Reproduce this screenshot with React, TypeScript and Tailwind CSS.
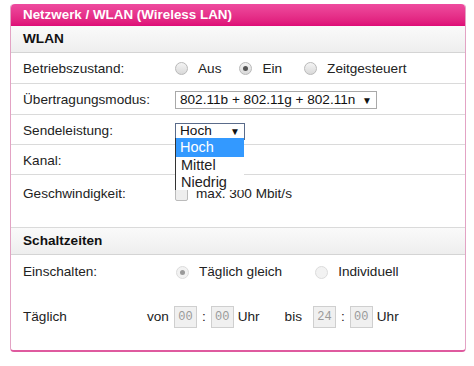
import React from "react";

function Radio({ checked = false, faded = false }: { checked?: boolean; faded?: boolean }) {
  return (
    <span
      className={`flex h-[13px] w-[13px] items-center justify-center rounded-full border ${
        faded ? "border-[#dcdcdc] bg-[#f2f2f2]" : "border-[#b9b9b9] bg-gradient-to-b from-[#f4f4f4] to-[#d9d9d9]"
      }`}
    >
      {checked && <span className={`h-[5px] w-[5px] rounded-full ${faded ? "bg-[#9a9a9a]" : "bg-[#555]"}`} />}
    </span>
  );
}

function Row({ label, children, className = "h-[31px] pt-[2px]" }: { label: string; children?: React.ReactNode; className?: string }) {
  return (
    <div className={`flex items-center border-b border-[#dadada] ${className}`}>
      <span className="w-[164px] shrink-0 pl-[12px]">{label}</span>
      <div className="flex items-center">{children}</div>
    </div>
  );
}

function Section({ title }: { title: string }) {
  return (
    <div className="flex h-[27px] items-center border-b border-[#d4d4d4] bg-gradient-to-b from-[#fafafa] to-[#eeeeee] pl-[12px] pt-[1px] font-bold text-[#111]">
      {title}
    </div>
  );
}

function TimeBox({ value }: { value: string }) {
  return (
    <span className="flex h-[22px] w-[23px] items-center justify-center border border-[#cfcfcf] bg-[#f0f0f0] font-['Liberation_Mono',monospace] text-[12px] text-[#9a9a9a]">
      {value}
    </span>
  );
}

export default function App() {
  return (
    <div className="h-[366px] w-[474px] bg-white pl-[10px] pr-[8px] pt-[4px] font-['Liberation_Sans',Arial,sans-serif] text-[13.6px] text-[#222]">
      <div className="h-[348px] rounded-[4px] border-x border-b-2 border-[#e3a3c4] border-b-[#df5a9f] bg-white">
        <div className="flex h-[22px] items-center rounded-t-[4px] bg-gradient-to-b from-[#ee4a9f] to-[#de0a77] pl-[12px] text-[13.4px] font-bold text-white">
          Netzwerk / WLAN (Wireless LAN)
        </div>
        <Section title="WLAN" />
        <Row label="Betriebszustand:">
          <span className="flex items-center gap-[10px]"><Radio /><span>Aus</span></span>
          <span className="ml-[18px] flex items-center gap-[10px]"><Radio checked /><span>Ein</span></span>
          <span className="ml-[22px] flex items-center gap-[10px]"><Radio /><span>Zeitgesteuert</span></span>
        </Row>
        <Row label="Übertragungsmodus:">
          <span className="flex h-[18px] w-[202px] items-center justify-between border border-[#a9a9a9] px-[4px] pt-[1px] text-[#111]">
            <span>802.11b + 802.11g + 802.11n</span>
            <span className="text-[10px]">▼</span>
          </span>
        </Row>
        <div className="relative">
          <Row label="Sendeleistung:" className="h-[30px] pt-[3px]">
            <span className="flex h-[17px] w-[70px] items-center justify-between border border-[#5a6b8a] px-[4px] pt-[1px] text-[#111]">
              <span>Hoch</span>
              <span className="text-[10px]">▼</span>
            </span>
          </Row>
          <div className="absolute left-[164px] top-[23px] z-10 flex w-[69px] flex-col border-l border-[#333] bg-white text-[14.5px]">
            <span className="h-[19px] bg-[#3399ff] pl-[4px] leading-[19px] text-white">Hoch</span>
            <span className="h-[17px] pl-[5px] leading-[17px]">Mittel</span>
            <span className="h-[16px] pl-[5px] leading-[16px]">Niedrig</span>
          </div>
          <Row label="Kanal:" className="h-[30px] pt-[3px]" />
          <div className="flex h-[53px] items-start border-b border-[#dadada] pt-[9px]">
            <span className="w-[164px] shrink-0 pl-[12px]">Geschwindigkeit:</span>
            <span className="flex items-center gap-[8px]">
              <span className="h-[13px] w-[13px] rounded-[2px] border border-[#bbb] bg-[#eee]" />
              <span>max. 300 Mbit/s</span>
            </span>
          </div>
        </div>
        <Section title="Schaltzeiten" />
        <div className="flex h-[33px] items-center pt-[2px]">
          <span className="w-[165px] shrink-0 pl-[12px]">Einschalten:</span>
          <span className="flex items-center gap-[10px]"><Radio checked faded /><span>Täglich gleich</span></span>
          <span className="ml-[33px] flex items-center gap-[10px]"><Radio faded /><span>Individuell</span></span>
        </div>
        <div className="mt-[17px] flex h-[24px] items-center">
          <span className="w-[136px] shrink-0 pl-[12px]">Täglich</span>
          <span className="mr-[5px]">von</span>
          <TimeBox value="00" />
          <span className="mx-[5px]">:</span>
          <TimeBox value="00" />
          <span className="ml-[4px]">Uhr</span>
          <span className="ml-[25px] mr-[11px]">bis</span>
          <TimeBox value="24" />
          <span className="mx-[5px]">:</span>
          <TimeBox value="00" />
          <span className="ml-[4px]">Uhr</span>
        </div>
      </div>
    </div>
  );
}
